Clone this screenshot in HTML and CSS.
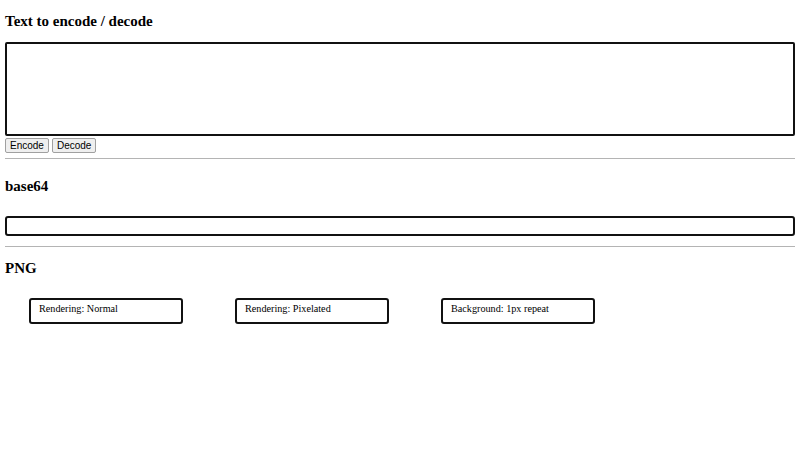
FILE: index.html
```html
<!DOCTYPE html>
<html>
<head>
<meta charset="utf-8">
<title>Base64 encode / decode</title>
<link rel="stylesheet" href="styles.css">
</head>
<body>
<h3 class="heading heading-first">Text to encode / decode</h3>
<textarea class="source"></textarea>
<div class="actions">
  <button class="btn" type="button">Encode</button>
  <button class="btn" type="button">Decode</button>
</div>
<hr class="rule">
<h3 class="heading heading-b64">base64</h3>
<input class="b64" type="text">
<hr class="rule rule-2">
<h3 class="heading heading-png">PNG</h3>
<div class="previews">
  <div class="preview">Rendering: Normal</div>
  <div class="preview">Rendering: Pixelated</div>
  <div class="preview">Background: 1px repeat</div>
</div>
</body>
</html>
```
FILE: styles.css
```css
html, body {
  background: #fff;
}
body {
  margin: 0;
  padding: 5px;
  font-family: "Liberation Serif", "Times New Roman", serif;
  color: #000;
}
.heading {
  font-size: 15px;
  font-weight: bold;
  margin: 0;
  line-height: 17px;
}
.heading-first {
  margin: 8px 0 12px;
}
.source {
  display: block;
  box-sizing: border-box;
  width: 100%;
  height: 94px;
  margin: 0;
  border: 2px solid #111;
  border-radius: 2px;
  resize: none;
  outline: none;
}
.actions {
  display: flex;
  gap: 3px;
  margin-top: 2px;
}
.btn {
  font-family: "Liberation Sans", Arial, sans-serif;
  font-size: 10px;
  line-height: 11px;
  padding: 1px 4px;
  margin: 0;
  color: #000;
  background: #efefef;
  border: 1px solid #a0a0a0;
  border-radius: 2px;
}
.rule {
  border: 0;
  border-top: 1px solid #b4b4b4;
  margin: 5px 0 0;
  height: 0;
}
.heading-b64 {
  margin: 19px 0 21px;
}
.b64 {
  display: block;
  box-sizing: border-box;
  width: 100%;
  height: 20px;
  margin: 0;
  border: 2px solid #111;
  border-radius: 3px;
  outline: none;
}
.rule-2 {
  margin-top: 10px;
}
.heading-png {
  margin: 13px 0 21px;
}
.previews {
  display: flex;
  gap: 52px;
  padding-left: 24px;
}
.preview {
  box-sizing: border-box;
  width: 154px;
  height: 26px;
  padding: 2px 8px;
  border: 2px solid #111;
  border-radius: 3px;
  font-size: 10.2px;
  line-height: 13px;
}
```
